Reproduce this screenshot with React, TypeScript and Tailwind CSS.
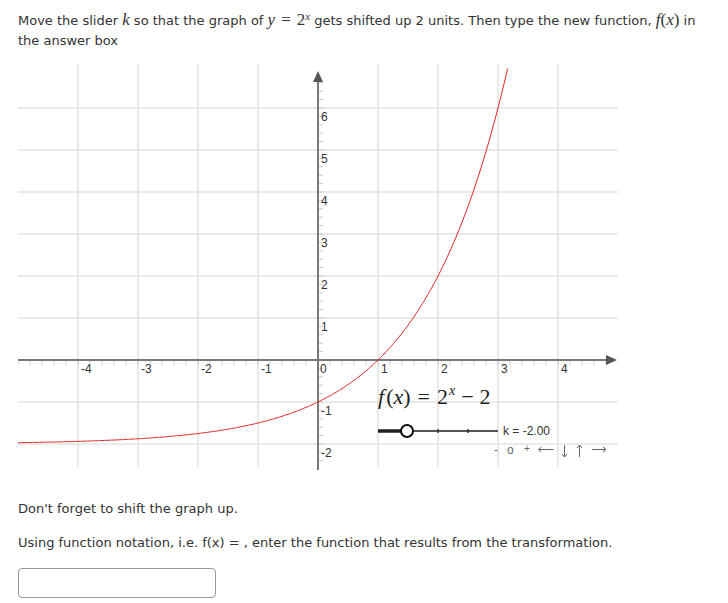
import React from 'react';

const ox = 318;
const oy = 360;
const ux = 60;
const uy = 42;

const px = (x: number) => ox + ux * x;
const py = (y: number) => oy - uy * y;

const Graph: React.FC = () => {
    const pts: string[] = [];
    for (let x = -5; x <= 3.2; x += 0.02) {
        const y = Math.pow(2, x) - 2;
        const Y = py(y);
        if (Y < 64) break;
        pts.push(`${px(x).toFixed(1)},${Y.toFixed(1)}`);
    }
    const xs = [-4, -3, -2, -1, 1, 2, 3, 4];
    const ys = [-2, -1, 1, 2, 3, 4, 5, 6];
    const xTicks: number[] = [];
    for (let t = 18; t <= 606; t += 12) xTicks.push(t);
    const yTicks: number[] = [];
    for (let k = -2.4; k <= 6.8; k += 0.2) yTicks.push(py(k));

    return (
        <svg width={612} height={412} viewBox="18 60 612 412" className="block">
            {/* grid */}
            {xs.map((v) => (
                <line key={'gx' + v} x1={px(v)} y1={65} x2={px(v)} y2={467} stroke="#e3e3e3" strokeWidth={1.5} />
            ))}
            {ys.map((v) => (
                <line key={'gy' + v} x1={18} y1={py(v)} x2={618} y2={py(v)} stroke="#e3e3e3" strokeWidth={1.5} />
            ))}

            {/* minor ticks */}
            {xTicks.map((t) => (
                <line key={'tx' + t} x1={t} y1={361} x2={t} y2={365} stroke="#c8c8c8" strokeWidth={1} />
            ))}
            {yTicks.map((t, i) => (
                <line key={'ty' + i} x1={319} y1={t} x2={323} y2={t} stroke="#c8c8c8" strokeWidth={1} />
            ))}

            {/* axes */}
            <line x1={18} y1={oy} x2={606} y2={oy} stroke="#7a7a7a" strokeWidth={2} />
            <polygon points="606,355 617,360 606,365" fill="#555" />
            <line x1={ox} y1={470} x2={ox} y2={82} stroke="#7a7a7a" strokeWidth={2} />
            <polygon points="313,82 318,71 323,82" fill="#555" />

            {/* labels */}
            <g fontFamily="'Liberation Sans', Arial, sans-serif" fontSize={12} fill="#333">
                {xs.map((v) => (
                    <text key={'lx' + v} x={px(v) + 3} y={373}>
                        {v}
                    </text>
                ))}
                <text x={320} y={373}>0</text>
                {ys.map((v) => (
                    <text key={'ly' + v} x={321} y={py(v) + 13}>
                        {v}
                    </text>
                ))}
            </g>

            {/* curve */}
            <polyline points={pts.join(' ')} fill="none" stroke="#e02020" strokeWidth={1} />

            {/* function label */}
            <text x={378} y={404} fontFamily="'Liberation Serif', 'Times New Roman', serif" fontSize={22} fill="#222">
                <tspan fontStyle="italic">f</tspan>
                <tspan dx={2}>(</tspan>
                <tspan fontStyle="italic">x</tspan>
                <tspan>)</tspan>
                <tspan dx={7}>=</tspan>
                <tspan dx={7}>2</tspan>
                <tspan fontStyle="italic" fontSize={14} dy={-9} dx={1}>x</tspan>
                <tspan dy={9} dx={6}>−</tspan>
                <tspan dx={6}>2</tspan>
            </text>

            {/* slider */}
            <line x1={378} y1={431} x2={498} y2={431} stroke="#555" strokeWidth={2} />
            <line x1={378} y1={431} x2={402} y2={431} stroke="#222" strokeWidth={3.5} />
            <line x1={438} y1={429} x2={438} y2={433} stroke="#333" strokeWidth={1.5} />
            <line x1={468} y1={429} x2={468} y2={433} stroke="#333" strokeWidth={1.5} />
            <circle cx={407} cy={431} r={6} fill="#fff" stroke="#111" strokeWidth={2} />
            <text x={503} y={435} fontFamily="'Liberation Sans', Arial, sans-serif" fontSize={12} fill="#333">
                k = -2.00
            </text>

            {/* slider controls */}
            <g fontFamily="'Liberation Sans', Arial, sans-serif" fill="#666">
                <text x={494} y={454} fontSize={12}>-</text>
                <text x={507} y={454} fontSize={12}>o</text>
                <text x={524} y={452} fontSize={10}>+</text>
            </g>
            <g fill="none" stroke="#666" strokeWidth={1}>
                <path d="M538.5 449.5h15M541.5 447l-3 2.5 3 2.5" />
                <path d="M564.5 445v12M562 454l2.5 3 2.5-3" />
                <path d="M579.5 445v12M577 448l2.5-3 2.5 3" />
                <path d="M592 449.5h14M603 447l3 2.5-3 2.5" />
            </g>
        </svg>
    );
};

const serif = "font-['Liberation_Serif','Times_New_Roman',serif] text-[17px] leading-[16px]";

const Tex: React.FC<{ children: React.ReactNode }> = ({ children }) => (
    <span className={`${serif} italic`}>{children}</span>
);

const App: React.FC = () => {
    return (
        <div className="w-[728px] h-[603px] bg-white px-[18px] pt-[11px] font-['DejaVu_Sans',sans-serif] text-[13px] leading-[20px] text-[#333]">
            <p className="w-[700px]">
                Move the slider <Tex>k</Tex> so that the graph of <Tex>y</Tex>
                <span className={`${serif} mx-[6px]`}>=</span>
                <span className={serif}>2</span>
                <sup className="font-['Liberation_Serif',serif] text-[11px] italic">x</sup> gets shifted up 2 units. Then type the new
                function, <Tex>f</Tex>
                <span className={serif}>(</span>
                <Tex>x</Tex>
                <span className={serif}>)</span> in the answer box
            </p>
            <div className="mt-[9px]">
                <Graph />
            </div>
            <p className="mt-[27px]">Don't forget to shift the graph up.</p>
            <p className="mt-[14px]">Using function notation, i.e. f(x) = , enter the function that results from the transformation.</p>
            <input
                type="text"
                className="mt-[15px] block w-[198px] h-[30px] rounded-[4px] border border-[#999] bg-white"
            />
        </div>
    );
};

export default App;
